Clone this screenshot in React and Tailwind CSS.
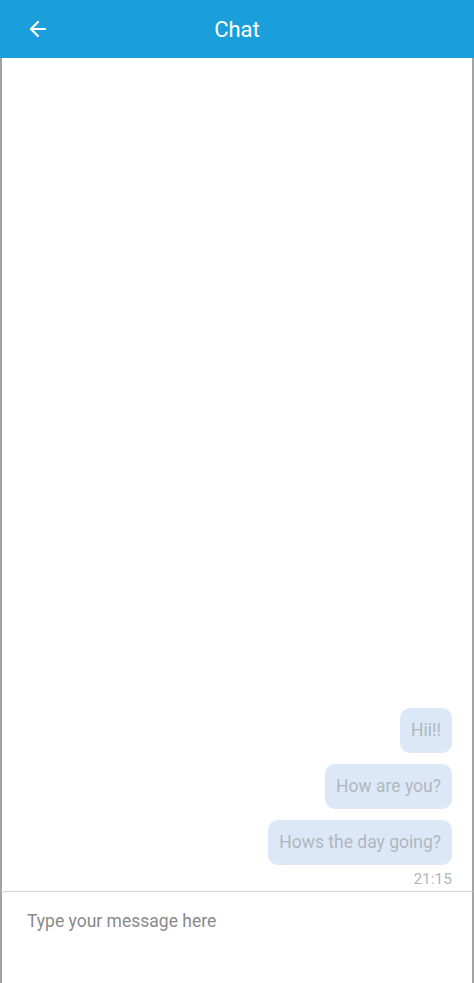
import { ArrowLeft } from 'lucide-react';

const messages = ['Hii!!', 'How are you?', 'Hows the day going?'];

function App() {
  return (
    <div className="h-[983px] flex flex-col bg-white" style={{ fontFamily: 'Roboto, "Noto Sans", sans-serif' }}>
      {/* Header */}
      <div className="h-[58px] bg-[#1a9fdb] flex items-center relative shrink-0">
        <button className="absolute left-[26px] text-white">
          <ArrowLeft size={24} strokeWidth={2.2} />
        </button>
        <span className="flex-1 text-center text-white text-[22px]">Chat</span>
      </div>

      {/* Messages */}
      <div className="flex-1 flex flex-col justify-end items-end border-x-2 border-[#a3a3a3] pr-[20px] pb-[3px]">
        <div className="flex flex-col items-end gap-[11px]">
          {messages.map((m) => (
            <div key={m} className="bg-[#dce8f8] rounded-[10px] h-[45px] px-[11px] flex items-center text-[17.5px] text-[#b1b6be]">
              {m}
            </div>
          ))}
        </div>
        <span className="leading-[18px] mt-[5px] text-[15.5px] text-[#b1b6be]">21:15</span>
      </div>

      {/* Input */}
      <div className="h-[92px] shrink-0 border-x-2 border-t border-[#a3a3a3] border-t-[#d4d4d4]">
        <input
          className="w-full pl-[25px] pt-[16px] text-[17.5px] text-gray-700 placeholder-[#8a8a8a] outline-none bg-transparent"
          placeholder="Type your message here"
        />
      </div>
    </div>
  );
}

export default App;
